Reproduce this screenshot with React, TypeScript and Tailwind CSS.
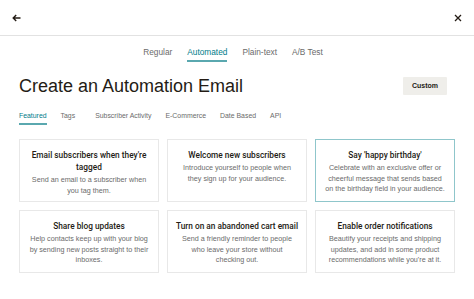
import React from 'react';

const tabs = ['Regular', 'Automated', 'Plain-text', 'A/B Test'];
const subTabs = ['Featured', 'Tags', 'Subscriber Activity', 'E-Commerce', 'Date Based', 'API'];

const cards = [
  { title: "Email subscribers when they're tagged", text: 'Send an email to a subscriber when you tag them.' },
  { title: 'Welcome new subscribers', text: 'Introduce yourself to people when they sign up for your audience.' },
  { title: "Say 'happy birthday'", text: 'Celebrate with an exclusive offer or cheerful message that sends based on the birthday field in your audience.', active: true },
  { title: 'Share blog updates', text: 'Help contacts keep up with your blog by sending new posts straight to their inboxes.' },
  { title: 'Turn on an abandoned cart email', text: 'Send a friendly reminder to people who leave your store without checking out.' },
  { title: 'Enable order notifications', text: "Beautify your receipts and shipping updates, and add in some product recommendations while you're at it." },
];

export default function App() {
  return (
    <div className="w-[474px] h-[299px] bg-white overflow-hidden text-[#241c15]" style={{ fontFamily: '"Liberation Sans", Arial, sans-serif' }}>
      {/* Top bar */}
      <div className="h-[36px] border-b border-[#e2e2e2] flex items-center justify-between pl-[12px] pr-[12px]">
        <svg width="9" height="8" viewBox="0 0 9 8" fill="none" stroke="#241c15" strokeWidth="1.4">
          <path d="M8.5 4H1.2M4.2 1L1.2 4l3 3" />
        </svg>
        <svg width="8" height="8" viewBox="0 0 8 8" fill="none" stroke="#241c15" strokeWidth="1.3">
          <path d="M1 1l6 6M7 1L1 7" />
        </svg>
      </div>

      {/* Type tabs */}
      <div className="flex justify-center gap-[15px] pt-[11px] pr-[8px] text-[8.3px]">
        {tabs.map((t) => (
          <div
            key={t}
            className={`pb-[3px] border-b-2 leading-[10px] ${
              t === 'Automated' ? 'text-[#007c89] border-[#5aa8af]' : 'text-[#6b6b6b] border-transparent'
            }`}
          >
            {t}
          </div>
        ))}
      </div>

      {/* Title */}
      <div className="flex items-center justify-between pl-[19px] pr-[27px] mt-[13px]">
        <h1 className="text-[18px] leading-[22px]">Create an Automation Email</h1>
        <button className="w-[44px] h-[18px] bg-[#efeeea] text-[7px] font-semibold rounded-[1px]">Custom</button>
      </div>

      {/* Category tabs */}
      <div className="flex gap-[14px] pl-[19px] mt-[14px] text-[6.9px]">
        {subTabs.map((t) => (
          <div
            key={t}
            className={`pb-[3px] border-b-2 leading-[9px] ${t === 'Tags' ? 'mr-[6px]' : ''} ${
              t === 'Featured' ? 'text-[#007c89] border-[#5aa8af]' : 'text-[#6b6b6b] border-transparent'
            }`}
          >
            {t}
          </div>
        ))}
      </div>

      {/* Cards */}
      <div className="grid grid-cols-3 gap-[8px] px-[19px] mt-[14px]">
        {cards.map((c) => (
          <div
            key={c.title}
            className={`h-[63px] border px-[6px] pt-[9px] text-center ${
              c.active ? 'border-[#8fc6cb]' : 'border-[#e8e8e8]'
            }`}
          >
            <div className="text-[8.3px] font-medium leading-[12px]" style={{ fontFamily: 'Roboto, "Liberation Sans", sans-serif' }}>
              {c.title}
            </div>
            <div className="text-[7.2px] text-[#6b6b6b] leading-[10.7px] mt-[2px] px-[3px]">{c.text}</div>
          </div>
        ))}
      </div>
    </div>
  );
}
